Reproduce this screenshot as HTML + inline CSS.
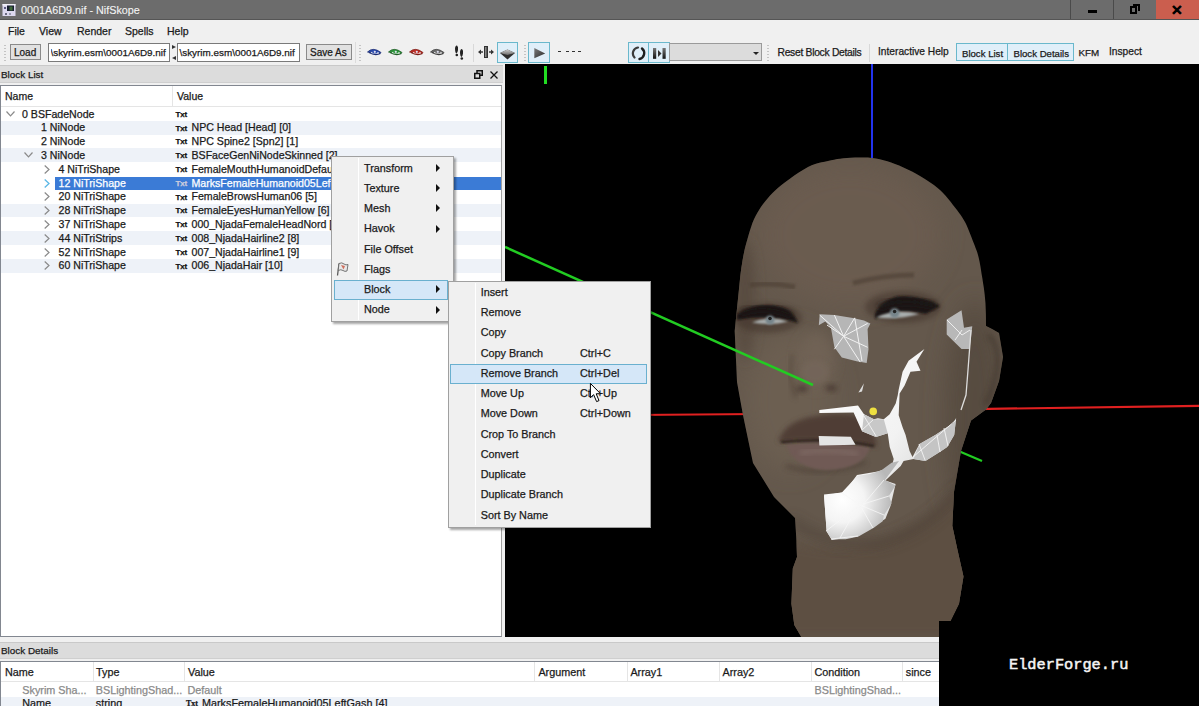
<!DOCTYPE html>
<html><head><meta charset="utf-8">
<style>
*{margin:0;padding:0;box-sizing:border-box}
html,body{width:1199px;height:706px;overflow:hidden;background:#f0f0f0;font-family:"Liberation Sans",sans-serif;font-size:11px;color:#1a1a1a}
.a{-webkit-text-stroke:0.25px currentColor}
.a{position:absolute;white-space:nowrap}
#title{left:0;top:0;width:1199px;height:20px;background:#6c6c6c;border-bottom:1px solid #555}
#menubar{left:0;top:20px;width:1199px;height:21px;background:#f0f0f0}
#toolbar{left:0;top:41px;width:1199px;height:23px;background:#f0f0f0}
.btn{background:#e1e1e1;border:1px solid #8a8a8a}
.field{background:#fff;border:1px solid #7a7a7a}
.hl{background:#e0eff9;border:1px solid #6ab8cc}
.dock{background:#dcdcdc;border-top:1px solid #c9c9c9;border-bottom:1px solid #cfcfcf}
.row{position:absolute;left:1px;width:500px;height:14px}
.alt{background:#eef2f8}
.t{position:absolute;white-space:nowrap}
.txt{position:absolute;font-size:8px;font-weight:bold;letter-spacing:-0.3px}
.menu{background:#f0f0f0;border:1px solid #a0a0a0;box-shadow:2px 2px 2px rgba(0,0,0,0.35)}
</style></head><body>
<!-- title bar -->
<div id="title" class="a"></div>
<svg class="a" style="left:2px;top:3px" width="14" height="14" viewBox="0 0 14 14"><rect x="0.5" y="1" width="13" height="12" fill="#dcd8ee"/><rect x="0.5" y="1" width="13" height="1.5" fill="#f4f2fa"/><rect x="5" y="2.5" width="7" height="5.5" fill="#1a2030"/><rect x="7.5" y="3.5" width="3" height="4" fill="#3f6a3a"/><rect x="2" y="4" width="2" height="2" fill="#5a5a80"/><rect x="3" y="10" width="2" height="2" fill="#6a6a80"/><rect x="7" y="10" width="2" height="2" fill="#9a9ab0"/></svg>

<div class="a" style="left:21px;top:4px;color:#f4f4f4;font-size:10.8px;-webkit-text-stroke:0.1px #f4f4f4">0001A6D9.nif - NifSkope</div>
<div class="a" style="left:1070px;top:0;width:1px;height:19px;background:#4a4a4a"></div>
<div class="a" style="left:1113px;top:0;width:1px;height:19px;background:#4a4a4a"></div>
<div class="a" style="left:1156px;top:0;width:43px;height:19px;background:#cb5e4e"></div>
<div class="a" style="left:1088px;top:10px;width:9px;height:3px;background:#000"></div>
<div class="a" style="left:1130px;top:6px;width:7px;height:8px;border:2px solid #000"></div>
<div class="a" style="left:1133px;top:4px;width:7px;height:7px;border-top:2px solid #000;border-right:2px solid #000"></div>
<div class="a" style="left:1171px;top:2px;font-size:14px;font-weight:bold;color:#000">&#x2715;</div>

<!-- menubar -->
<div id="menubar" class="a"></div>
<div class="a" style="left:8px;top:24.5px;font-size:10.5px">File</div>
<div class="a" style="left:39px;top:24.5px;font-size:10.5px">View</div>
<div class="a" style="left:77px;top:24.5px;font-size:10.5px">Render</div>
<div class="a" style="left:125px;top:24.5px;font-size:10.5px">Spells</div>
<div class="a" style="left:167px;top:24.5px;font-size:10.5px">Help</div>

<!-- toolbar -->
<div id="toolbar" class="a"></div>

<!-- toolbar items -->
<div class="a" style="left:4px;top:45px;width:2px;height:16px;background:repeating-linear-gradient(#c4c4c4 0 1px,transparent 1px 3px)"></div>
<div class="a btn" style="left:10px;top:44px;width:31px;height:16px"></div>
<div class="a" style="left:14px;top:47px;font-size:10px">Load</div>
<div class="a field" style="left:48px;top:43px;width:122px;height:19px"></div>
<div class="a" style="left:50.5px;top:47px;font-size:9.9px;width:118px;overflow:hidden">\skyrim.esm\0001A6D9.nif</div>
<div class="a" style="left:172px;top:45px;width:0;height:0;border-left:4px solid #333;border-top:2px solid transparent;border-bottom:2px solid transparent"></div>
<div class="a" style="left:172px;top:56px;width:0;height:0;border-right:4px solid #333;border-top:2px solid transparent;border-bottom:2px solid transparent"></div>
<div class="a field" style="left:177px;top:43px;width:123px;height:19px"></div>
<div class="a" style="left:179.5px;top:47px;font-size:9.9px">\skyrim.esm\0001A6D9.nif</div>
<div class="a btn" style="left:306px;top:44px;width:46px;height:16px"></div>
<div class="a" style="left:310px;top:47px;font-size:10px">Save As</div>
<div class="a" style="left:355px;top:42px;width:1px;height:21px;background:#dcdcdc"></div>
<div class="a" style="left:359px;top:45px;width:2px;height:16px;background:repeating-linear-gradient(#c4c4c4 0 1px,transparent 1px 3px)"></div>

<!-- toolbar icons -->
<svg class="a" style="left:366px;top:45px" width="112" height="16" viewBox="0 0 112 16"><g transform="translate(1,2)"><path d="M0.5 5 Q6 -0.5 14 5.5 L13 6.5 Q7 3 3 5.5Z" fill="#2b4cb0" stroke="#1a2a70" stroke-width="0.8"/><path d="M2 5.5 Q8 9 13.5 6.5" stroke="#1a2a70" stroke-width="1.2" fill="none"/><path d="M3.5 5.2 Q8 2.5 12 5.8 Q8 7.5 3.5 5.2Z" fill="#2b4cb0"/><circle cx="7.8" cy="4.8" r="1.1" fill="#dde"/><circle cx="4.8" cy="5.6" r="0.7" fill="#fff"/><circle cx="11" cy="5.8" r="0.7" fill="#fff"/></g><g transform="translate(22,2)"><path d="M0.5 5 Q6 -0.5 14 5.5 L13 6.5 Q7 3 3 5.5Z" fill="#2e9a3c" stroke="#1f5a26" stroke-width="0.8"/><path d="M2 5.5 Q8 9 13.5 6.5" stroke="#1f5a26" stroke-width="1.2" fill="none"/><path d="M3.5 5.2 Q8 2.5 12 5.8 Q8 7.5 3.5 5.2Z" fill="#2e9a3c"/><circle cx="7.8" cy="4.8" r="1.1" fill="#dde"/><circle cx="4.8" cy="5.6" r="0.7" fill="#fff"/><circle cx="11" cy="5.8" r="0.7" fill="#fff"/></g><g transform="translate(43,2)"><path d="M0.5 5 Q6 -0.5 14 5.5 L13 6.5 Q7 3 3 5.5Z" fill="#c22e26" stroke="#7a1a14" stroke-width="0.8"/><path d="M2 5.5 Q8 9 13.5 6.5" stroke="#7a1a14" stroke-width="1.2" fill="none"/><path d="M3.5 5.2 Q8 2.5 12 5.8 Q8 7.5 3.5 5.2Z" fill="#c22e26"/><circle cx="7.8" cy="4.8" r="1.1" fill="#dde"/><circle cx="4.8" cy="5.6" r="0.7" fill="#fff"/><circle cx="11" cy="5.8" r="0.7" fill="#fff"/></g><g transform="translate(64,2)"><path d="M0.5 5 Q6 -0.5 14 5.5 L13 6.5 Q7 3 3 5.5Z" fill="#707070" stroke="#3a3a3a" stroke-width="0.8"/><path d="M2 5.5 Q8 9 13.5 6.5" stroke="#3a3a3a" stroke-width="1.2" fill="none"/><path d="M3.5 5.2 Q8 2.5 12 5.8 Q8 7.5 3.5 5.2Z" fill="#707070"/><circle cx="7.8" cy="4.8" r="1.1" fill="#dde"/><circle cx="4.8" cy="5.6" r="0.7" fill="#fff"/><circle cx="11" cy="5.8" r="0.7" fill="#fff"/></g><g transform="translate(88,0)"><path d="M1 3 Q1.5 0 3 0.5 Q4.5 1.5 4 5 Q3.5 8 2.5 8.5 Q1 8 1 3Z" fill="#222"/><ellipse cx="2.8" cy="10" rx="1.3" ry="1.2" fill="#222"/><path d="M6 6.5 Q6.5 3.5 8 4 Q9.5 5 9 8.5 Q8.5 11.5 7.5 12 Q6 11.5 6 6.5Z" fill="#222"/><ellipse cx="7.8" cy="13.5" rx="1.3" ry="1.2" fill="#222"/></g></svg>
<div class="a" style="left:473px;top:44px;width:1px;height:18px;background:#d8d8d8"></div>
<svg class="a" style="left:478px;top:45px" width="16" height="14" viewBox="0 0 16 14">
 <rect x="6" y="1" width="4" height="12" fill="#333"/><rect x="7" y="2" width="1.5" height="10" fill="#888"/>
 <path d="M0 7 L3 4.5 L3 9.5Z M16 7 L13 4.5 L13 9.5Z" fill="#333"/><rect x="2" y="6.3" width="3" height="1.4" fill="#333"/><rect x="11" y="6.3" width="3" height="1.4" fill="#333"/>
</svg>
<div class="a hl" style="left:497px;top:42px;width:21px;height:21px"></div>
<svg class="a" style="left:499px;top:49px" width="17" height="11" viewBox="0 0 17 11"><defs><linearGradient id="dg" x1="0" y1="0" x2="0" y2="1"><stop offset="0" stop-color="#cfcfcf"/><stop offset="1" stop-color="#6a6a6a"/></linearGradient></defs><path d="M1 4 L8.5 0.5 L16 4 L8.5 10.5Z" fill="#2e2e2e"/><path d="M1 4 L8.5 0.5 L16 4 L8.5 6Z" fill="url(#dg)"/></svg>
<div class="a" style="left:524px;top:45px;width:2px;height:16px;background:repeating-linear-gradient(#c4c4c4 0 1px,transparent 1px 3px)"></div>
<div class="a hl" style="left:528px;top:42px;width:22px;height:21px"></div>
<svg class="a" style="left:533px;top:47px" width="14" height="13" viewBox="0 0 14 13"><defs><linearGradient id="pgd" x1="0" y1="0" x2="1" y2="1"><stop offset="0" stop-color="#7a7a7a"/><stop offset="1" stop-color="#2a2a2a"/></linearGradient></defs><path d="M1.3 1 L12.2 6.4 L1.3 11.3Z" fill="url(#pgd)"/></svg>
<div class="a" style="left:558px;top:51px;width:3px;height:1px;background:#333"></div>
<div class="a" style="left:566px;top:51px;width:3px;height:1px;background:#333"></div>
<div class="a" style="left:572px;top:51px;width:3px;height:1px;background:#333"></div>
<div class="a" style="left:578px;top:51px;width:3px;height:1px;background:#333"></div>
<div class="a hl" style="left:628px;top:42px;width:21px;height:21px"></div>
<svg class="a" style="left:631px;top:46px" width="16" height="15" viewBox="0 0 16 15"><path d="M7 1.5 A6 6 0 0 0 3.5 11.5" stroke="#3c3c3c" stroke-width="2.2" fill="none" stroke-linecap="round"/><path d="M11 2.5 A6 6 0 0 1 8.5 13" stroke="#1e1e1e" stroke-width="2.4" fill="none" stroke-linecap="round"/></svg>
<div class="a hl" style="left:648px;top:42px;width:22px;height:21px"></div>
<svg class="a" style="left:652px;top:48px" width="15" height="11" viewBox="0 0 15 11"><defs><linearGradient id="bg2" x1="0" y1="0" x2="0" y2="1"><stop offset="0" stop-color="#777"/><stop offset="1" stop-color="#111"/></linearGradient></defs><rect x="1" y="0" width="3.2" height="10.8" fill="url(#bg2)"/><rect x="10.5" y="0" width="3.2" height="10.8" fill="url(#bg2)"/><path d="M6 2 L9.5 5.4 L6 9Z" fill="#333"/></svg>
<div class="a" style="left:669px;top:43px;width:93px;height:18px;background:#dcdcdc;border:1px solid #9a9a9a"></div>
<div class="a" style="left:753px;top:52px;width:0;height:0;border-top:3px solid #222;border-left:3px solid transparent;border-right:3px solid transparent"></div>
<div class="a" style="left:767px;top:45px;width:2px;height:16px;background:repeating-linear-gradient(#c4c4c4 0 1px,transparent 1px 3px)"></div>
<div class="a" style="left:777.5px;top:47px;font-size:10.3px;letter-spacing:-0.28px">Reset Block Details</div>
<div class="a" style="left:869px;top:44px;width:1px;height:18px;background:#d8d8d8"></div>
<div class="a" style="left:878px;top:46px;font-size:10.2px">Interactive Help</div>
<div class="a hl" style="left:956px;top:43px;width:52px;height:18px"></div>
<div class="a hl" style="left:1007px;top:43px;width:67px;height:18px"></div>
<div class="a" style="left:962px;top:47.5px;font-size:9.6px">Block List</div>
<div class="a" style="left:1013.5px;top:47.5px;font-size:9.6px">Block Details</div>
<div class="a" style="left:1078.5px;top:46.5px;font-size:9.8px">KFM</div>
<div class="a" style="left:1109px;top:46px;font-size:10.2px">Inspect</div>

<!-- block list dock -->
<div class="a dock" style="left:0;top:65px;width:503px;height:18px"></div>
<div class="a" style="left:1px;top:69px;font-size:9.9px">Block List</div>
<svg class="a" style="left:474px;top:70px" width="9" height="9" viewBox="0 0 9 9"><rect x="3" y="0.75" width="5.25" height="4.5" fill="none" stroke="#111" stroke-width="1.5"/><rect x="0.75" y="3.5" width="5" height="4.75" fill="#dcdcdc" stroke="#111" stroke-width="1.5"/></svg>
<svg class="a" style="left:489.5px;top:70.5px" width="8" height="8" viewBox="0 0 8 8"><path d="M0.5 0.5 L7.5 7.5 M7.5 0.5 L0.5 7.5" stroke="#111" stroke-width="1.3"/></svg>
<div class="a" style="left:0;top:85px;width:502px;height:552px;background:#fff;border:1px solid #828790;border-right-color:#a0a0a0"></div>
<div class="a" style="left:1px;top:86px;width:500px;height:21px;background:#fff;border-bottom:1px solid #e5e5e5"></div>
<div class="a" style="left:172px;top:86px;width:1px;height:20px;background:#e5e5e5"></div>
<div class="a" style="left:5px;top:90px;font-size:10.5px">Name</div>
<div class="a" style="left:177px;top:90px;font-size:10.5px">Value</div>

<svg class="a" style="left:6px;top:111.00px" width="9" height="6" viewBox="0 0 9 6"><path d="M0.5 0.5 L4.5 4.8 L8.5 0.5" stroke="#8a8a8a" stroke-width="1.2" fill="none"/></svg>
<div class="a" style="left:22px;top:107.50px;font-size:10.6px;color:#1a1a1a;line-height:13px">0 BSFadeNode</div>
<div class="a" style="left:175.5px;top:110.80px;font-size:8px;font-weight:bold;color:#111;line-height:8px;font-family:'Liberation Sans',sans-serif;letter-spacing:-0.2px">Txt</div>
<div class="a" style="left:1px;top:120.80px;width:500px;height:13.8px;background:#eef2f8"></div>
<div class="a" style="left:41px;top:121.30px;font-size:10.6px;color:#1a1a1a;line-height:13px">1 NiNode</div>
<div class="a" style="left:175.5px;top:124.60px;font-size:8px;font-weight:bold;color:#111;line-height:8px;font-family:'Liberation Sans',sans-serif;letter-spacing:-0.2px">Txt</div>
<div class="a" style="left:191.5px;top:121.30px;font-size:10.6px;color:#1a1a1a;line-height:13px">NPC Head [Head] [0]</div>
<div class="a" style="left:41px;top:135.10px;font-size:10.6px;color:#1a1a1a;line-height:13px">2 NiNode</div>
<div class="a" style="left:175.5px;top:138.40px;font-size:8px;font-weight:bold;color:#111;line-height:8px;font-family:'Liberation Sans',sans-serif;letter-spacing:-0.2px">Txt</div>
<div class="a" style="left:191.5px;top:135.10px;font-size:10.6px;color:#1a1a1a;line-height:13px">NPC Spine2 [Spn2] [1]</div>
<div class="a" style="left:1px;top:148.40px;width:500px;height:13.8px;background:#eef2f8"></div>
<svg class="a" style="left:24px;top:152.40px" width="9" height="6" viewBox="0 0 9 6"><path d="M0.5 0.5 L4.5 4.8 L8.5 0.5" stroke="#8a8a8a" stroke-width="1.2" fill="none"/></svg>
<div class="a" style="left:41px;top:148.90px;font-size:10.6px;color:#1a1a1a;line-height:13px">3 NiNode</div>
<div class="a" style="left:175.5px;top:152.20px;font-size:8px;font-weight:bold;color:#111;line-height:8px;font-family:'Liberation Sans',sans-serif;letter-spacing:-0.2px">Txt</div>
<div class="a" style="left:191.5px;top:148.90px;font-size:10.6px;color:#1a1a1a;line-height:13px">BSFaceGenNiNodeSkinned [2]</div>
<svg class="a" style="left:44px;top:164.70px" width="6" height="9" viewBox="0 0 6 9"><path d="M0.7 0.5 L5 4.5 L0.7 8.5" stroke="#8a8a8a" stroke-width="1.2" fill="none"/></svg>
<div class="a" style="left:58.5px;top:162.70px;font-size:10.6px;color:#1a1a1a;line-height:13px">4 NiTriShape</div>
<div class="a" style="left:175.5px;top:166.00px;font-size:8px;font-weight:bold;color:#111;line-height:8px;font-family:'Liberation Sans',sans-serif;letter-spacing:-0.2px">Txt</div>
<div class="a" style="left:191.5px;top:162.70px;font-size:10.6px;color:#1a1a1a;line-height:13px">FemaleMouthHumanoidDefault [3]</div>
<div class="a" style="left:55px;top:176.50px;width:446px;height:13.5px;background:#3b7bd6"></div>
<svg class="a" style="left:44px;top:178.50px" width="6" height="9" viewBox="0 0 6 9"><path d="M0.7 0.5 L5 4.5 L0.7 8.5" stroke="#5cb8e6" stroke-width="1.3" fill="none"/></svg>
<div class="a" style="left:58.5px;top:176.50px;font-size:10.6px;color:#fff;line-height:13px">12 NiTriShape</div>
<div class="a" style="left:175.5px;top:179.80px;font-size:8px;font-weight:bold;color:#ccd;line-height:8px;font-family:'Liberation Sans',sans-serif;letter-spacing:-0.2px">Txt</div>
<div class="a" style="left:191.5px;top:176.50px;font-size:10.6px;color:#fff;line-height:13px">MarksFemaleHumanoid05LeftGash [4]</div>
<svg class="a" style="left:44px;top:192.30px" width="6" height="9" viewBox="0 0 6 9"><path d="M0.7 0.5 L5 4.5 L0.7 8.5" stroke="#8a8a8a" stroke-width="1.2" fill="none"/></svg>
<div class="a" style="left:58.5px;top:190.30px;font-size:10.6px;color:#1a1a1a;line-height:13px">20 NiTriShape</div>
<div class="a" style="left:175.5px;top:193.60px;font-size:8px;font-weight:bold;color:#111;line-height:8px;font-family:'Liberation Sans',sans-serif;letter-spacing:-0.2px">Txt</div>
<div class="a" style="left:191.5px;top:190.30px;font-size:10.6px;color:#1a1a1a;line-height:13px">FemaleBrowsHuman06 [5]</div>
<div class="a" style="left:1px;top:203.60px;width:500px;height:13.8px;background:#eef2f8"></div>
<svg class="a" style="left:44px;top:206.10px" width="6" height="9" viewBox="0 0 6 9"><path d="M0.7 0.5 L5 4.5 L0.7 8.5" stroke="#8a8a8a" stroke-width="1.2" fill="none"/></svg>
<div class="a" style="left:58.5px;top:204.10px;font-size:10.6px;color:#1a1a1a;line-height:13px">28 NiTriShape</div>
<div class="a" style="left:175.5px;top:207.40px;font-size:8px;font-weight:bold;color:#111;line-height:8px;font-family:'Liberation Sans',sans-serif;letter-spacing:-0.2px">Txt</div>
<div class="a" style="left:191.5px;top:204.10px;font-size:10.6px;color:#1a1a1a;line-height:13px">FemaleEyesHumanYellow [6]</div>
<svg class="a" style="left:44px;top:219.90px" width="6" height="9" viewBox="0 0 6 9"><path d="M0.7 0.5 L5 4.5 L0.7 8.5" stroke="#8a8a8a" stroke-width="1.2" fill="none"/></svg>
<div class="a" style="left:58.5px;top:217.90px;font-size:10.6px;color:#1a1a1a;line-height:13px">37 NiTriShape</div>
<div class="a" style="left:175.5px;top:221.20px;font-size:8px;font-weight:bold;color:#111;line-height:8px;font-family:'Liberation Sans',sans-serif;letter-spacing:-0.2px">Txt</div>
<div class="a" style="left:191.5px;top:217.90px;font-size:10.6px;color:#1a1a1a;line-height:13px">000_NjadaFemaleHeadNord [7]</div>
<div class="a" style="left:1px;top:231.20px;width:500px;height:13.8px;background:#eef2f8"></div>
<svg class="a" style="left:44px;top:233.70px" width="6" height="9" viewBox="0 0 6 9"><path d="M0.7 0.5 L5 4.5 L0.7 8.5" stroke="#8a8a8a" stroke-width="1.2" fill="none"/></svg>
<div class="a" style="left:58.5px;top:231.70px;font-size:10.6px;color:#1a1a1a;line-height:13px">44 NiTriStrips</div>
<div class="a" style="left:175.5px;top:235.00px;font-size:8px;font-weight:bold;color:#111;line-height:8px;font-family:'Liberation Sans',sans-serif;letter-spacing:-0.2px">Txt</div>
<div class="a" style="left:191.5px;top:231.70px;font-size:10.6px;color:#1a1a1a;line-height:13px">008_NjadaHairline2 [8]</div>
<svg class="a" style="left:44px;top:247.50px" width="6" height="9" viewBox="0 0 6 9"><path d="M0.7 0.5 L5 4.5 L0.7 8.5" stroke="#8a8a8a" stroke-width="1.2" fill="none"/></svg>
<div class="a" style="left:58.5px;top:245.50px;font-size:10.6px;color:#1a1a1a;line-height:13px">52 NiTriShape</div>
<div class="a" style="left:175.5px;top:248.80px;font-size:8px;font-weight:bold;color:#111;line-height:8px;font-family:'Liberation Sans',sans-serif;letter-spacing:-0.2px">Txt</div>
<div class="a" style="left:191.5px;top:245.50px;font-size:10.6px;color:#1a1a1a;line-height:13px">007_NjadaHairline1 [9]</div>
<div class="a" style="left:1px;top:258.80px;width:500px;height:13.8px;background:#eef2f8"></div>
<svg class="a" style="left:44px;top:261.30px" width="6" height="9" viewBox="0 0 6 9"><path d="M0.7 0.5 L5 4.5 L0.7 8.5" stroke="#8a8a8a" stroke-width="1.2" fill="none"/></svg>
<div class="a" style="left:58.5px;top:259.30px;font-size:10.6px;color:#1a1a1a;line-height:13px">60 NiTriShape</div>
<div class="a" style="left:175.5px;top:262.60px;font-size:8px;font-weight:bold;color:#111;line-height:8px;font-family:'Liberation Sans',sans-serif;letter-spacing:-0.2px">Txt</div>
<div class="a" style="left:191.5px;top:259.30px;font-size:10.6px;color:#1a1a1a;line-height:13px">006_NjadaHair [10]</div>
<!-- viewport -->
<svg class="a" style="left:505px;top:64px" width="694" height="573" viewBox="505 64 694 573">
<defs>
 <clipPath id="hc"><path d="M738.0 298.7 L738.4 295.1 L738.9 290.1 L739.5 284.3 L740.1 278.1 L740.8 272.1 L741.5 267.0 L742.2 262.7 L742.8 258.9 L743.5 255.2 L744.2 251.7 L745.0 248.1 L746.0 244.3 L747.1 240.2 L748.3 235.9 L749.6 231.5 L751.0 227.2 L752.4 223.1 L754.0 219.3 L755.6 215.9 L757.4 212.7 L759.2 209.7 L761.1 206.8 L763.1 204.0 L765.3 201.2 L767.6 198.5 L769.9 195.8 L772.3 193.3 L774.9 190.7 L777.9 188.1 L781.2 185.3 L785.1 182.2 L789.6 178.9 L794.3 175.5 L799.2 172.3 L803.8 169.4 L808.0 167.0 L811.7 165.3 L815.2 164.0 L818.5 163.0 L821.7 162.3 L824.8 161.7 L828.0 161.0 L831.2 160.3 L834.2 159.7 L837.2 159.1 L840.3 158.7 L843.5 158.3 L847.0 158.0 L850.8 157.8 L855.0 157.6 L859.2 157.4 L863.6 157.4 L867.9 157.6 L872.0 158.0 L875.9 158.6 L879.7 159.3 L883.5 160.2 L887.3 161.3 L891.1 162.6 L895.0 164.0 L899.1 165.6 L903.4 167.5 L907.7 169.5 L912.0 171.6 L916.1 173.8 L920.0 176.0 L923.7 178.2 L927.2 180.4 L930.6 182.7 L933.9 185.0 L937.0 187.4 L940.0 190.0 L942.8 192.7 L945.6 195.7 L948.1 198.7 L950.6 201.8 L952.8 204.7 L955.0 207.5 L957.0 210.0 L958.8 212.4 L960.5 214.7 L962.0 217.0 L963.5 219.4 L965.0 222.0 L966.4 224.8 L967.8 227.9 L969.0 231.0 L970.2 234.1 L971.4 237.1 L972.5 240.0 L973.6 242.7 L974.6 245.2 L975.5 247.7 L976.4 250.1 L977.3 252.5 L978.0 255.0 L978.6 257.3 L979.1 259.5 L979.6 261.7 L980.0 264.0 L980.5 266.7 L981.0 270.0 L981.6 273.9 L982.4 278.4 L983.1 283.2 L983.9 288.2 L984.5 293.2 L985.0 298.0 L985.4 303.0 L985.6 308.4 L985.8 313.8 L985.9 318.7 L985.9 323.0 L986.0 326.0 L992.0 329.0 L999.0 333.0 L1003.0 357.0 L999.0 381.0 L991.0 403.0 L986.0 409.5 L971.0 420.4 L961.0 451.0 L954.0 491.7 L952.3 525.7 L957.4 549.5 L963.5 576.6 L959.0 603.8 L950.6 620.8 L939.0 640.0 L801.0 640.0 L801.0 636.5 L794.3 625.0 L791.4 603.8 L792.8 568.4 L797.0 557.0 L796.4 540.0 L795.0 518.0 L774.0 497.0 L753.0 463.0 L743.0 415.0 L737.0 382.0 L734.7 331.0Z"/></clipPath>
 <filter id="b1" x="-50%" y="-50%" width="200%" height="200%"><feGaussianBlur stdDeviation="1"/></filter>
 <filter id="b2" x="-50%" y="-50%" width="200%" height="200%"><feGaussianBlur stdDeviation="2.5"/></filter>
 <filter id="b4" x="-100%" y="-100%" width="300%" height="300%"><feGaussianBlur stdDeviation="6"/></filter>
 <filter id="b8" x="-100%" y="-100%" width="300%" height="300%"><feGaussianBlur stdDeviation="12"/></filter>
 <linearGradient id="pg1" x1="0" y1="0" x2="1" y2="1"><stop offset="0" stop-color="#ffffff"/><stop offset="0.5" stop-color="#f2f2f2"/><stop offset="1" stop-color="#c4c4c4"/></linearGradient>
 <linearGradient id="pg2" x1="0" y1="0" x2="1" y2="1"><stop offset="0" stop-color="#f4f4f4"/><stop offset="1" stop-color="#d8d8d8"/></linearGradient>
 <radialGradient id="cg" gradientUnits="userSpaceOnUse" cx="842" cy="500" r="50"><stop offset="0" stop-color="#ffffff"/><stop offset="0.45" stop-color="#f4f4f4"/><stop offset="1" stop-color="#b8b8b8"/></radialGradient>
</defs>
<rect x="505" y="64" width="694" height="573" fill="#000"/>
<line x1="545.5" y1="66" x2="545.5" y2="84" stroke="#22dd22" stroke-width="3"/>
<line x1="872" y1="64" x2="872" y2="160" stroke="#2233ee" stroke-width="2"/>
<line x1="505" y1="416" x2="760" y2="414" stroke="#e02020" stroke-width="2.2"/>
<line x1="960" y1="409.3" x2="1199" y2="405.8" stroke="#e02020" stroke-width="2.2"/>
<line x1="955" y1="449.5" x2="982" y2="461" stroke="#22cc22" stroke-width="2.2"/>
<g clip-path="url(#hc)">
 <rect x="720" y="150" width="300" height="490" fill="#64584c"/>
 <ellipse cx="850" cy="235" rx="90" ry="70" fill="#6a5c4f" filter="url(#b8)"/>
 <ellipse cx="790" cy="400" rx="45" ry="70" fill="#6c5e51" filter="url(#b8)"/>
 <ellipse cx="816" cy="360" rx="18" ry="28" fill="#706255" filter="url(#b4)"/>
 <ellipse cx="975" cy="420" rx="30" ry="120" fill="#574b41" filter="url(#b8)"/>
 <path d="M740 522 Q800 550 850 547 Q920 537 975 472 L1010 640 L720 640Z" fill="#5d4f43" filter="url(#b4)"/>
 <ellipse cx="745" cy="300" rx="10" ry="60" fill="#584b40" filter="url(#b4)"/>
 <!-- brows -->
 <path d="M750 285 Q772 282 795 287" stroke="#4d4034" stroke-width="5" fill="none" opacity="0.6" filter="url(#b1)"/>
 <path d="M853 283 Q884 275 914 275" stroke="#4d4034" stroke-width="5" fill="none" opacity="0.6" filter="url(#b1)"/>
 <!-- eye shading -->
 <ellipse cx="768" cy="318" rx="34" ry="15" fill="#3c2f28" opacity="0.45" filter="url(#b2)"/>
 <ellipse cx="903" cy="307" rx="38" ry="16" fill="#3c2f28" opacity="0.45" filter="url(#b2)"/>
 <path d="M737 314 Q765 299 788 310 Q795 315 798 323 Q770 314 737 320Z" fill="#1c1512" filter="url(#b1)"/><path d="M740 313 Q765 303 792 315" stroke="#1c1512" stroke-width="6" fill="none" opacity="0.7" filter="url(#b2)"/>
 <path d="M875 313 Q887 295 905 296 Q926 297 940 306 L926 314 Q900 307 875 319Z" fill="#1c1512" filter="url(#b1)"/><path d="M878 308 Q900 296 935 306" stroke="#1c1512" stroke-width="7" fill="none" opacity="0.7" filter="url(#b2)"/>
 <path d="M752 322.5 Q770 315 788 321.5 Q770 326 752 322.5Z" fill="#a9aeae" filter="url(#b1)"/>
 <circle cx="770" cy="320" r="4.5" fill="#76848a" filter="url(#b1)"/><circle cx="770" cy="318.5" r="1.8" fill="#222"/>
 <path d="M876 317.5 Q895 308 919.5 314 Q897 320 876 317.5Z" fill="#a9aeae" filter="url(#b1)"/>
 <circle cx="894.6" cy="313" r="4.8" fill="#76848a" filter="url(#b1)"/><circle cx="894.6" cy="311.5" r="1.8" fill="#222"/>
 <!-- nose -->
 <ellipse cx="815" cy="372" rx="14" ry="12" fill="#75665a" opacity="0.8" filter="url(#b2)"/>
 <path d="M792 355 Q788 380 796 398" stroke="#52443a" stroke-width="4" fill="none" opacity="0.5" filter="url(#b2)"/>
 <ellipse cx="802" cy="388.7" rx="6" ry="3.5" fill="#3a2c25" opacity="0.55" filter="url(#b2)"/>
 <ellipse cx="831.2" cy="388" rx="6" ry="3.5" fill="#3a2c25" opacity="0.55" filter="url(#b2)"/>
 <!-- lips -->
 <path d="M786 466 Q825 478 866 462" stroke="#4c3e36" stroke-width="4" fill="none" opacity="0.6" filter="url(#b2)"/>
 <path d="M778 442 Q784 424 806 418 Q835 411 858 416 Q874 426 877 447 Q830 438 778 442Z" fill="#4f3e35" filter="url(#b2)"/>
 <path d="M786 445 Q830 440 870 447 Q864 469 826 470 Q794 468 786 445Z" fill="#6f5a54" filter="url(#b1)"/>
 <path d="M800 453 Q828 448 858 454" stroke="#85716b" stroke-width="5" fill="none" opacity="0.6" filter="url(#b2)"/>
 <path d="M781 442 Q830 437 874 446" stroke="#2e231e" stroke-width="2.5" fill="none" filter="url(#b1)"/>
 <path d="M790 520 Q830 548 880 543 Q930 530 958 490" stroke="#4a3e35" stroke-width="8" fill="none" opacity="0.6" filter="url(#b4)"/>
 <!-- ear -->
 <path d="M988 335 Q1000 345 997 370 Q993 392 985 405" stroke="#43372e" stroke-width="5" fill="none" opacity="0.6" filter="url(#b2)"/>
</g>
<!-- white patches -->
<path d="M818.8 325.2 L819.7 314.2 L834.4 315.1 L852.9 317.9 L864 320.6 L870.4 323.4 L867.6 329 L868.5 349.2 L866.7 363 L856.5 361.2 L841.8 357.5 L834.4 347.3 L830.8 327.1 L825.2 321.6Z" fill="#b6b6b6"/>
<path d="M819.7 315.1 L843.6 336.3 L834.4 315.1 M854.7 317.9 L843.6 336.3 L867.6 323.4 M843.6 336.3 L834.4 349.2 M843.6 336.3 L860.2 362.1 M843.6 336.3 L867.6 347.3 M854.7 317.9 L862 361 M827 325 L843.6 336.3" stroke="#f2f2f2" stroke-width="1" fill="none"/>
<path d="M946.7 319.6 L961.5 310.2 L964 327.7 L972.3 326.3 L969.6 349 L961.5 349 L946.7 334.4Z" fill="#b8b8b8"/>
<path d="M947 320 L962 335 L970 330 M955 340 L962 330" stroke="#eee" stroke-width="1" fill="none"/>
<path d="M971 330 L968 370 L966 395 L961 410" stroke="#ddd" stroke-width="1.3" fill="none"/>
<path d="M819.3 410 L858 405.5 L864 414.3 L873.9 419.3 L877.8 418.3 L883.8 419.3 L889.7 414.3 L895.7 403.4 L897.7 395.5 L898.7 389.6 L902.6 371.7 L908.6 360.8 L924.4 349 L916.5 361.8 L920.5 370.7 L910.5 371.7 L904.6 385.6 L899.6 393.5 L898.7 415.3 L902.6 427.2 L905.6 435.1 L909.6 451 L912.5 457 L919.5 444 L935.3 435.1 L953.2 423.3 L956.1 418.3 L954.2 435.1 L947.2 447 L941.3 451 L925.4 460.9 L913.5 458.9 L903.6 460.9 L900.7 466 L885.4 480.4 L895.6 484 L890.5 506 L885.4 518.7 L877.7 523.8 L857 536.5 L831.8 540 L826.7 531.4 L824 495.7 L844.6 492 L857 475 L877.7 471.5 L891.7 466.9 L893.7 458.9 L889.7 447 L887.7 433.2 L875.9 437.1 L862 431.2 L853.6 412.5 L819.3 413Z" fill="url(#pg1)"/>
<path d="M824 494.5 L841.9 492.6 L857.2 476 L870 474 L881.4 470.3 L891.6 462.7 L899 461 L885 480 L895.5 485.6 L889 495.8 L891.6 503.5 L884 515 L882.7 521.3 L873.8 527.7 L858.5 536.6 L845.7 539.2 L831.7 539.2 L826.6 531.5Z" fill="url(#cg)"/>
<path d="M826 531 L860 505 L884 515 M860 505 L873 528 M860 505 L889 496 M860 505 L842 493 M840 538 L850 520 L884 480 M831 539 L858 536" stroke="#f6f6f6" stroke-width="0.9" fill="none" opacity="0.9"/>
<path d="M919.5 444 L935.3 435.1 L953.2 423.3 L956.1 418.3 L954.2 435.1 L947.2 447 L941.3 451 L925.4 460.9 L913.5 458.9Z" fill="#c4c4c4"/>
<path d="M864 414.3 L873.9 419.3 L883.8 419.3 L887.7 433.2 L875.9 437.1 L862 431.2Z" fill="#c8c8c8"/>
<path d="M919 444 L925 460 M937 435 L940 452 M913 457 L956 420 M944 428 L948 446 M864 416 L876 436 M873 420 L862 430" stroke="#f4f4f4" stroke-width="0.9" fill="none"/>
<path d="M818.7 436 L850.8 436.7 L855.5 444.7 L819.4 445.4Z" fill="#e4e4e4"/>
<path d="M864 383.3 L858.4 392.5 L862 391.5Z" fill="#ddd"/>
<circle cx="873.2" cy="411.4" r="3.8" fill="#eee040"/>
<line x1="505" y1="247" x2="813" y2="385" stroke="#22cc22" stroke-width="2.5"/>
</svg>



<!-- block details dock -->
<div class="a dock" style="left:0;top:642px;width:1199px;height:17px"></div>
<div class="a" style="left:1px;top:645px;font-size:9.9px">Block Details</div>
<div class="a" style="left:0;top:661px;width:1199px;height:45px;background:#fff;border-top:1px solid #828790;border-left:1px solid #828790"></div>
<div class="a" style="left:1px;top:662px;width:1198px;height:20px;border-bottom:1px solid #e5e5e5"></div>
<div class="a" style="left:1px;top:697px;width:1198px;height:9px;background:#eef2f8"></div>
<div class="a" style="left:939px;top:621px;width:260px;height:85px;background:#000"></div>
<div class="a" style="left:1009px;top:654.5px;font-family:'Liberation Mono',monospace;font-size:15.3px;font-weight:normal;-webkit-text-stroke:0.5px #f4f4f4;color:#f4f4f4;line-height:20px">ElderForge.ru</div>
<div class="a" style="left:92.7px;top:662px;width:1px;height:20px;background:#e5e5e5"></div>
<div class="a" style="left:184.4px;top:662px;width:1px;height:20px;background:#e5e5e5"></div>
<div class="a" style="left:533.8px;top:662px;width:1px;height:20px;background:#e5e5e5"></div>
<div class="a" style="left:626.6px;top:662px;width:1px;height:20px;background:#e5e5e5"></div>
<div class="a" style="left:718.6px;top:662px;width:1px;height:20px;background:#e5e5e5"></div>
<div class="a" style="left:810.7px;top:662px;width:1px;height:20px;background:#e5e5e5"></div>
<div class="a" style="left:902.0px;top:662px;width:1px;height:20px;background:#e5e5e5"></div>
<div class="a" style="left:5px;top:666px;font-size:10.8px;line-height:13px">Name</div>
<div class="a" style="left:96px;top:666px;font-size:10.8px;line-height:13px">Type</div>
<div class="a" style="left:188px;top:666px;font-size:10.8px;line-height:13px">Value</div>
<div class="a" style="left:538.4px;top:666px;font-size:10.8px;line-height:13px">Argument</div>
<div class="a" style="left:630.4px;top:666px;font-size:10.8px;line-height:13px">Array1</div>
<div class="a" style="left:722.5px;top:666px;font-size:10.8px;line-height:13px">Array2</div>
<div class="a" style="left:814.5px;top:666px;font-size:10.8px;line-height:13px">Condition</div>
<div class="a" style="left:905.8px;top:666px;font-size:10.8px;line-height:13px">since</div>
<div class="a" style="left:22.3px;top:683.5px;font-size:10.8px;line-height:13px;color:#8a8a8a">Skyrim Sha...</div>
<div class="a" style="left:95.8px;top:683.5px;font-size:10.8px;line-height:13px;color:#8a8a8a">BSLightingShad...</div>
<div class="a" style="left:187.5px;top:683.5px;font-size:10.8px;line-height:13px;color:#8a8a8a">Default</div>
<div class="a" style="left:814.5px;top:683.5px;font-size:10.8px;line-height:13px;color:#8a8a8a">BSLightingShad...</div>
<div class="a" style="left:22.3px;top:697px;font-size:10.8px;line-height:13px">Name</div>
<div class="a" style="left:95.8px;top:697px;font-size:10.8px;line-height:13px">string</div>
<div class="a" style="left:186px;top:700px;font-size:8px;font-weight:bold;line-height:8px;font-family:'Liberation Serif',serif">Txt</div>
<div class="a" style="left:202px;top:697px;font-size:10.8px;line-height:13px">MarksFemaleHumanoid05LeftGash [4]</div>
<!-- menus -->
<div class="a menu" style="left:331px;top:156px;width:123px;height:166px"></div>
<div class="a" style="left:358px;top:158px;width:1px;height:162px;background:#dadada;border-right:1px solid #fff"></div>
<div class="a" style="left:364px;top:161.56px;font-size:10.8px;line-height:13px">Transform</div>
<div class="a" style="left:435.5px;top:163.80px;width:0;height:0;border-left:4.5px solid #111;border-top:4px solid transparent;border-bottom:4px solid transparent"></div>
<div class="a" style="left:364px;top:181.81px;font-size:10.8px;line-height:13px">Texture</div>
<div class="a" style="left:435.5px;top:184.05px;width:0;height:0;border-left:4.5px solid #111;border-top:4px solid transparent;border-bottom:4px solid transparent"></div>
<div class="a" style="left:364px;top:202.06px;font-size:10.8px;line-height:13px">Mesh</div>
<div class="a" style="left:435.5px;top:204.30px;width:0;height:0;border-left:4.5px solid #111;border-top:4px solid transparent;border-bottom:4px solid transparent"></div>
<div class="a" style="left:364px;top:222.31px;font-size:10.8px;line-height:13px">Havok</div>
<div class="a" style="left:435.5px;top:224.55px;width:0;height:0;border-left:4.5px solid #111;border-top:4px solid transparent;border-bottom:4px solid transparent"></div>
<div class="a" style="left:364px;top:242.56px;font-size:10.8px;line-height:13px">File Offset</div>
<div class="a" style="left:364px;top:262.81px;font-size:10.8px;line-height:13px">Flags</div>
<div class="a" style="left:333.5px;top:280.3px;width:114px;height:19.5px;background:#d5e7f8;border:1px solid #6ab0cf"></div>
<div class="a" style="left:364px;top:283.06px;font-size:10.8px;line-height:13px">Block</div>
<div class="a" style="left:435.5px;top:285.30px;width:0;height:0;border-left:4.5px solid #111;border-top:4px solid transparent;border-bottom:4px solid transparent"></div>
<div class="a" style="left:364px;top:303.31px;font-size:10.8px;line-height:13px">Node</div>
<div class="a" style="left:435.5px;top:305.55px;width:0;height:0;border-left:4.5px solid #111;border-top:4px solid transparent;border-bottom:4px solid transparent"></div>
<svg class="a" style="left:336px;top:262px" width="13" height="14" viewBox="0 0 13 14"><path d="M1.5 13.5 L3 1.5" stroke="#555" stroke-width="1.2"/><path d="M3 1.5 Q6 0 8 2 Q10 3.5 12 2.5 L11 9 Q9 10 7 8.5 Q5 7 2.2 8.5Z" fill="#e8e8e8" stroke="#666" stroke-width="0.9"/><path d="M5 3 L9 4 L7.5 7.5Z" fill="#c8503a" opacity="0.8"/></svg>
<div class="a menu" style="left:448px;top:280.5px;width:203px;height:247px"></div>
<div class="a" style="left:475px;top:283px;width:1px;height:242px;background:#dadada;border-right:1px solid #fff"></div>
<div class="a" style="left:480.7px;top:285.76px;font-size:10.8px;line-height:13px">Insert</div>
<div class="a" style="left:480.7px;top:306.03px;font-size:10.8px;line-height:13px">Remove</div>
<div class="a" style="left:480.7px;top:326.30px;font-size:10.8px;line-height:13px">Copy</div>
<div class="a" style="left:480.7px;top:346.57px;font-size:10.8px;line-height:13px">Copy Branch</div>
<div class="a" style="left:580px;top:346.57px;font-size:10.8px;line-height:13px">Ctrl+C</div>
<div class="a" style="left:450px;top:363.6px;width:197px;height:20px;background:#d5e7f8;border:1px solid #6ab0cf"></div>
<div class="a" style="left:480.7px;top:366.84px;font-size:10.8px;line-height:13px">Remove Branch</div>
<div class="a" style="left:580px;top:366.84px;font-size:10.8px;line-height:13px">Ctrl+Del</div>
<div class="a" style="left:480.7px;top:387.11px;font-size:10.8px;line-height:13px">Move Up</div>
<div class="a" style="left:580px;top:387.11px;font-size:10.8px;line-height:13px">Ctrl+Up</div>
<div class="a" style="left:480.7px;top:407.38px;font-size:10.8px;line-height:13px">Move Down</div>
<div class="a" style="left:580px;top:407.38px;font-size:10.8px;line-height:13px">Ctrl+Down</div>
<div class="a" style="left:480.7px;top:427.65px;font-size:10.8px;line-height:13px">Crop To Branch</div>
<div class="a" style="left:480.7px;top:447.92px;font-size:10.8px;line-height:13px">Convert</div>
<div class="a" style="left:480.7px;top:468.19px;font-size:10.8px;line-height:13px">Duplicate</div>
<div class="a" style="left:480.7px;top:488.46px;font-size:10.8px;line-height:13px">Duplicate Branch</div>
<div class="a" style="left:480.7px;top:508.73px;font-size:10.8px;line-height:13px">Sort By Name</div>
<svg class="a" style="left:589px;top:382px" width="14" height="22" viewBox="0 0 14 22"><path d="M1.4 1.4 L1.4 15.8 L4.6 12.6 L7.6 19.6 L10 18.6 L7.2 11.8 L11.6 11.8Z" fill="#fff" stroke="#000" stroke-width="1"/></svg>
</body></html>
